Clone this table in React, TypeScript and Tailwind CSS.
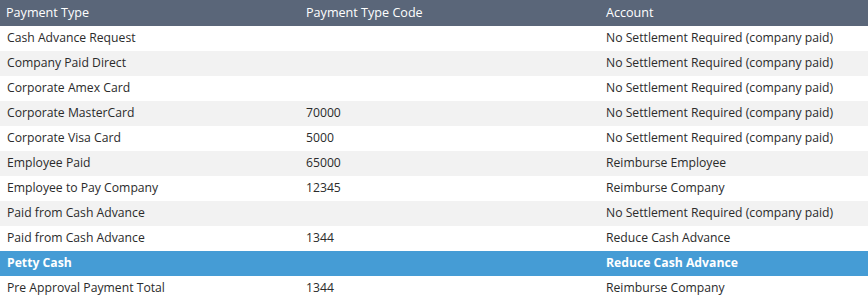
import React from "react";

const rows: { type: string; code: string; account: string; hl?: boolean }[] = [
  { type: "Cash Advance Request", code: "", account: "No Settlement Required (company paid)" },
  { type: "Company Paid Direct", code: "", account: "No Settlement Required (company paid)" },
  { type: "Corporate Amex Card", code: "", account: "No Settlement Required (company paid)" },
  { type: "Corporate MasterCard", code: "70000", account: "No Settlement Required (company paid)" },
  { type: "Corporate Visa Card", code: "5000", account: "No Settlement Required (company paid)" },
  { type: "Employee Paid", code: "65000", account: "Reimburse Employee" },
  { type: "Employee to Pay Company", code: "12345", account: "Reimburse Company" },
  { type: "Paid from Cash Advance", code: "", account: "No Settlement Required (company paid)" },
  { type: "Paid from Cash Advance", code: "1344", account: "Reduce Cash Advance" },
  { type: "Petty Cash", code: "", account: "Reduce Cash Advance", hl: true },
  { type: "Pre Approval Payment Total", code: "1344", account: "Reimburse Company" },
];

export default function App() {
  return (
    <div className="w-[868px] h-[303px] bg-white text-[12.2px] text-[#2b2b2b]" style={{ fontFamily: '"Open Sans", "Noto Sans", sans-serif' }}>
      <div className="grid grid-cols-[299px_300px_1fr] h-[26px] items-center bg-[#5a6679] text-white text-[12.6px]">
        <div className="px-[6px]">Payment Type</div>
        <div className="px-[7px]">Payment Type Code</div>
        <div className="px-[7px]">Account</div>
      </div>
      {rows.map((r, i) => (
        <div
          key={i}
          className={
            "grid grid-cols-[299px_300px_1fr] h-[25px] items-center " +
            (r.hl ? "bg-[#459cd5] text-white font-bold" : i % 2 === 1 ? "bg-[#f2f2f2]" : "bg-white")
          }
        >
          <div className="px-[7px]">{r.type}</div>
          <div className="px-[7px]">{r.code}</div>
          <div className="px-[7px]">{r.account}</div>
        </div>
      ))}
    </div>
  );
}
